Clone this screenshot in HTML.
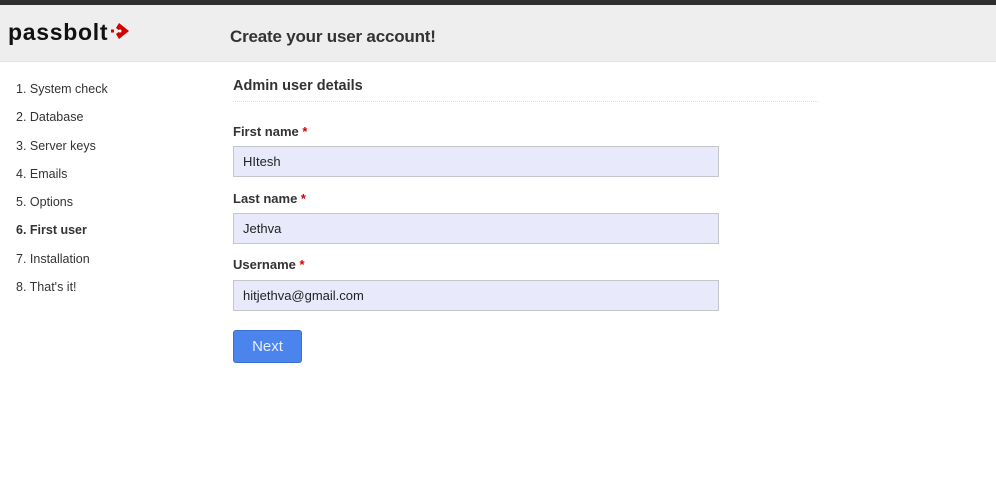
<!DOCTYPE html>
<html><head><style>
*{margin:0;padding:0;box-sizing:border-box}
body{width:996px;height:499px;background:#fff;font-family:"Liberation Sans",sans-serif;color:#333;position:relative;overflow:hidden}
.top{position:absolute;left:0;top:0;width:996px;height:5px;background:#2f2f2f}
.hdr{position:absolute;left:0;top:5px;width:996px;height:57px;background:#eee;border-bottom:1px solid #e2e2e2}
.logo{position:absolute;left:8px;top:14px;font-size:23px;font-weight:bold;color:#111;letter-spacing:0.7px}
.title{position:absolute;left:230px;top:22px;font-size:17px;font-weight:bold;color:#333;letter-spacing:-0.2px}
.nav{position:absolute;left:16px;top:82px;font-size:12.5px;color:#333}
.nav div{height:28.3px}
h3{position:absolute;left:233px;top:78px;font-size:14.5px;font-weight:bold;color:#333}
.sep{position:absolute;left:233px;top:101px;width:585px;border-top:1px dotted #ddd}
label{position:absolute;left:233px;font-size:13px;font-weight:bold;color:#333}
label span{color:#d40101}
.in{position:absolute;left:233px;width:486px;height:31px;background:#e8eafc;border:1px solid #c5c5cc;font-size:13px;padding:0 9px;line-height:29px;color:#222}
.btn{position:absolute;left:233px;top:330px;width:69px;height:33px;background:#4a84ec;border:1px solid #3b6fcf;border-radius:3px;color:#e6efff;font-size:15px;text-align:center;line-height:31px}
</style></head><body>
<div class="top"></div>
<div class="hdr">
<div class="logo">passbolt</div>
<svg style="position:absolute;left:110px;top:17px" width="20" height="18" viewBox="0 0 20 18"><path d="M9 1 L19 9 L9 17 L6 12 L10 9 L6 6 Z" fill="#d40101"/><rect x="1" y="7.5" width="3" height="3" fill="#d40101"/><circle cx="10" cy="9" r="1.5" fill="#fff"/></svg>
<div class="title">Create your user account!</div>
</div>
<div class="nav">
<div>1. System check</div><div>2. Database</div><div>3. Server keys</div><div>4. Emails</div><div>5. Options</div><div style="font-weight:bold">6. First user</div><div>7. Installation</div><div>8. That's it!</div>
</div>
<h3>Admin user details</h3>
<div class="sep"></div>
<label style="top:124px">First name <span>*</span></label>
<div class="in" style="top:146px">HItesh</div>
<label style="top:191px">Last name <span>*</span></label>
<div class="in" style="top:213px">Jethva</div>
<label style="top:257px">Username <span>*</span></label>
<div class="in" style="top:280px">hitjethva@gmail.com</div>
<div class="btn">Next</div>
</body></html>
